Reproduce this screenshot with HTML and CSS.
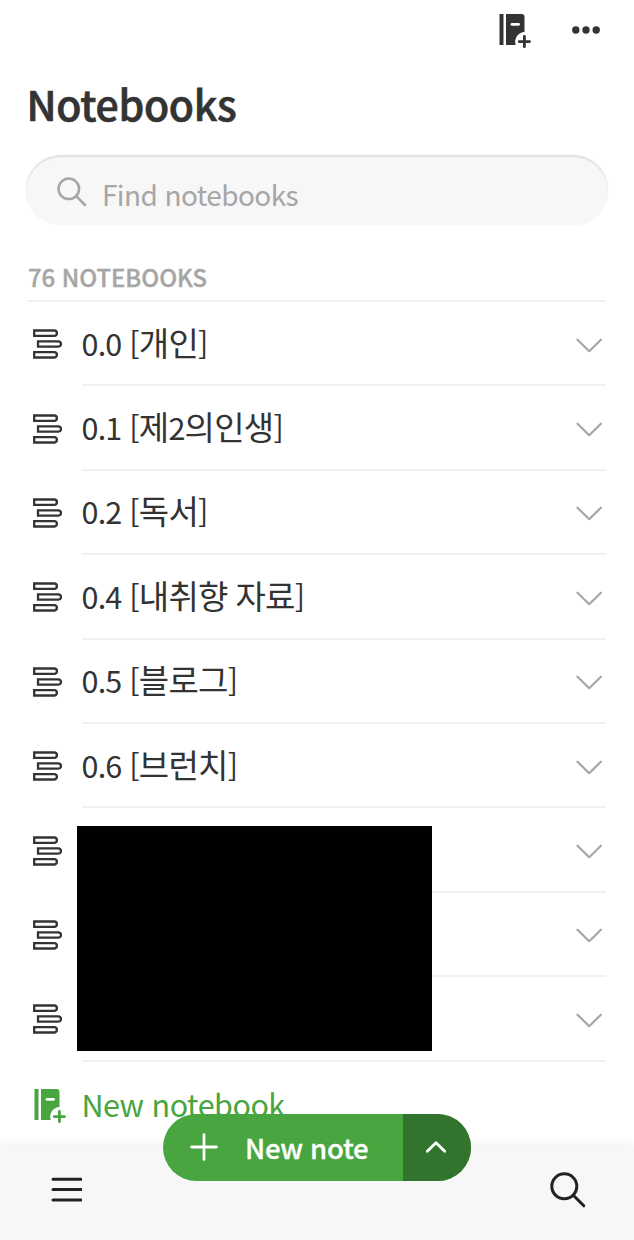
FILE: index.html
```
<!DOCTYPE html>
<html lang="ko">
<head>
    <meta charset="UTF-8">
    <meta name="viewport" content="width=device-width, initial-scale=1.0">
    <title>Notebooks</title>
    <link rel="stylesheet" href="styles.css">
</head>
<body>

    <!-- Shared icons -->
    <svg class="sprite">
        <symbol id="icon-notebook" viewBox="0 0 34 36">
            <path fill="currentColor" d="M.5 1h4v31h-4z"/>
            <path fill="currentColor" d="M7 1H22.500a3 3 0 0 1 3 3v15a9.800 9.800 0 0 0-8.800 13H7z"/>
            <path stroke="#fff" stroke-width="2.800" stroke-linecap="round" d="M13 11.300h6.600"/>
            <path stroke="currentColor" stroke-width="2.800" stroke-linecap="round" d="M20.200 28.600h10.300M25.400 23.500v10.200"/>
        </symbol>
        <symbol id="icon-stack" viewBox="0 0 30 30">
            <g fill="none" stroke="currentColor" stroke-width="2.300">
                <path d="M2.200 1.500H22.700a2.700 2.700 0 0 1 0 5.300H2.200z"/>
                <path d="M6 12.300H26.300a2.700 2.700 0 0 1 0 5.400H6z"/>
                <path d="M2.200 23.200H22.700a2.700 2.700 0 0 1 0 5.300H2.200z"/>
            </g>
        </symbol>
        <symbol id="icon-down" viewBox="0 0 26 15">
            <path fill="none" stroke="currentColor" stroke-width="2.200" stroke-linecap="round" stroke-linejoin="round" d="M1.500 1.700 13.200 13.200 24.900 1.700"/>
        </symbol>
    </svg>

    <header class="toolbar">
        <svg class="notebook-icon"><use href="#icon-notebook"/></svg>
        <svg class="more-icon" viewBox="0 0 28 8">
            <circle cx="3.800" cy="4" r="3.700"/>
            <circle cx="14" cy="4" r="3.700"/>
            <circle cx="24.200" cy="4" r="3.700"/>
        </svg>
    </header>

    <main>
        <h1>Notebooks</h1>

        <div class="search">
            <svg class="search-icon" viewBox="0 0 30 30">
                <circle cx="11.800" cy="11.800" r="10.300"/>
                <path d="M19.200 19.200 28 28"/>
            </svg>
            <span>Find notebooks</span>
        </div>

        <h2>76 NOTEBOOKS</h2>

        <ul class="notebooks">
            <li><svg class="stack"><use href="#icon-stack"/></svg><div class="row"><div class="name">0.0 [<span class="ko">개인</span>]</div><svg class="down"><use href="#icon-down"/></svg></div></li>
            <li><svg class="stack"><use href="#icon-stack"/></svg><div class="row"><div class="name">0.1 [<span class="ko">제</span>2<span class="ko">의인생</span>]</div><svg class="down"><use href="#icon-down"/></svg></div></li>
            <li><svg class="stack"><use href="#icon-stack"/></svg><div class="row"><div class="name">0.2 [<span class="ko">독서</span>]</div><svg class="down"><use href="#icon-down"/></svg></div></li>
            <li><svg class="stack"><use href="#icon-stack"/></svg><div class="row"><div class="name">0.4 [<span class="ko">내취향</span> <span class="ko">자료</span>]</div><svg class="down"><use href="#icon-down"/></svg></div></li>
            <li><svg class="stack"><use href="#icon-stack"/></svg><div class="row"><div class="name">0.5 [<span class="ko">블로그</span>]</div><svg class="down"><use href="#icon-down"/></svg></div></li>
            <li><svg class="stack"><use href="#icon-stack"/></svg><div class="row"><div class="name">0.6 [<span class="ko">브런치</span>]</div><svg class="down"><use href="#icon-down"/></svg></div></li>
            <li><svg class="stack"><use href="#icon-stack"/></svg><div class="row"><div class="hidden-names"></div><svg class="down"><use href="#icon-down"/></svg></div></li>
            <li><svg class="stack"><use href="#icon-stack"/></svg><div class="row"><svg class="down"><use href="#icon-down"/></svg></div></li>
            <li><svg class="stack"><use href="#icon-stack"/></svg><div class="row"><svg class="down"><use href="#icon-down"/></svg></div></li>
        </ul>

        <div class="new-notebook">
            <svg class="notebook-icon"><use href="#icon-notebook"/></svg>
            <span>New notebook</span>
        </div>
    </main>

    <footer class="bottom-bar">
        <svg class="menu-icon" viewBox="0 0 31 26">
            <path d="M2 2.300h28M2 12.600h28M2 22.900h28"/>
        </svg>
        <svg class="find-icon" viewBox="0 0 36 36">
            <circle cx="14.300" cy="14.300" r="12.500"/>
            <path d="M23.300 23.300 33.800 33.800"/>
        </svg>
        <div class="new-note">
            <div class="create">
                <svg class="plus-icon" viewBox="0 0 28 28"><path d="M14 1.600v24.800M1.600 14h24.800"/></svg>
                <span>New note</span>
            </div>
            <div class="expand">
                <svg class="up-icon" viewBox="0 0 20 12"><path d="M1.300 10.300 10 1.700l8.700 8.600"/></svg>
            </div>
        </div>
    </footer>

</body>
</html>
```
FILE: styles.css
```
* {
    box-sizing: border-box;
}
body {
    margin: 0;
    height: 1240px;
    overflow: hidden;
    display: flex;
    flex-direction: column;
    background: #fff;
    color: #333;
    font-family: "Noto Sans CJK KR", sans-serif;
}
svg {
    display: block;
    flex: none;
}
.sprite {
    position: absolute;
    width: 0;
    height: 0;
}
.toolbar {
    display: flex;
    justify-content: flex-end;
    align-items: flex-start;
    gap: 39px;
    height: 73px;
    padding: 13px 34px 0 0;
}
.notebook-icon {
    width: 34px;
    height: 36px;
}
.more-icon {
    width: 28px;
    height: 8px;
    margin-top: 13px;
    fill: #333;
}
main {
    flex: 1;
    min-height: 0;
    padding: 0 28px 0 27px;
}
h1 {
    margin: 0 0 0 -0.500px;
    height: 82px;
    font-size: 41px;
    line-height: 60px;
    font-weight: 500;
    letter-spacing: -0.300px;
    -webkit-text-stroke: 0.700px #333;
}
/* Search field */
.search {
    display: flex;
    align-items: center;
    gap: 15px;
    height: 70px;
    margin: 0 -2px 0 -1px;
    padding-left: 31px;
    border-radius: 35px;
    background: #f7f7f7;
    box-shadow: inset 0 2px 1px #e2e2e2, 0 0 2px #eee;
    color: #a6a6a6;
    font-size: 28px;
    line-height: 42px;
    letter-spacing: -0.600px;
}
.search span {
    padding-top: 7px;
}
.search-icon {
    width: 30px;
    height: 30px;
    margin-top: 4px;
    fill: none;
    stroke: #a6a6a6;
    stroke-width: 2.500;
    stroke-linecap: round;
}
h2 {
    margin: 0;
    height: 77px;
    padding: 35px 0 0 1px;
    border-bottom: 2px solid #f0f0f0;
    color: #a6a6a6;
    font-size: 23.800px;
    line-height: 34px;
    font-weight: 500;
    -webkit-text-stroke: 0.400px #a6a6a6;
}
/* Notebook list */
.notebooks {
    margin: 0;
    padding: 0;
    list-style: none;
}
.notebooks li {
    display: flex;
    align-items: center;
    height: 84.400px;
    padding-left: 5px;
}
.stack {
    width: 30px;
    height: 30px;
}
.row {
    position: relative;
    flex: 1;
    display: flex;
    align-items: center;
    height: 100%;
    margin-left: 20px;
    padding-right: 4px;
    border-bottom: 2px solid #f0f0f0;
}
.name {
    margin-left: -0.500px;
    padding-bottom: 1px;
    font-size: 30.500px;
    line-height: 46px;
    letter-spacing: -0.800px;
}
.ko {
    font-size: 33px;
    line-height: 1;
    letter-spacing: -0.700px;
}
.down {
    width: 26px;
    height: 15px;
    margin: 4px 0 0 auto;
    color: #a6a6a6;
}
/* Covers the last three names */
.hidden-names {
    position: absolute;
    z-index: 1;
    left: -5px;
    top: 18px;
    width: 355px;
    height: 225px;
    background: #000;
}
.new-notebook {
    display: flex;
    align-items: flex-start;
    gap: 13.500px;
    padding: 26px 0 0 7px;
    color: #48a540;
    font-size: 30.500px;
    line-height: 46px;
    letter-spacing: -0.500px;
}
.new-notebook span {
    margin-top: -7px;
}
/* Bottom bar */
.bottom-bar {
    position: relative;
    flex: none;
    display: flex;
    justify-content: space-between;
    align-items: flex-start;
    height: 92px;
    padding: 24px 48px 0 51px;
    background: #f7f7f7;
    box-shadow: 0 -2px 12px rgba(0, 0, 0, 0.08);
    fill: none;
    stroke: #222;
    stroke-width: 3;
    stroke-linecap: round;
    stroke-linejoin: round;
}
.menu-icon {
    width: 31px;
    height: 26px;
    margin-top: 5px;
}
.find-icon {
    width: 36px;
    height: 36px;
}
.new-note {
    position: absolute;
    left: 163px;
    top: -34.500px;
    display: flex;
    width: 307.500px;
    height: 67.500px;
    border-radius: 34px;
    overflow: hidden;
    background: #48a540;
    color: #fff;
    font-size: 27.500px;
    line-height: 42px;
    font-weight: 500;
    letter-spacing: -0.300px;
    stroke: #fff;
    stroke-width: 2.800;
}
.create {
    flex: 1;
    display: flex;
    align-items: center;
    padding-left: 26.500px;
    gap: 27.500px;
}
.create span {
    padding-bottom: 1px;
    -webkit-text-stroke: 0.300px #fff;
}
.plus-icon {
    width: 28px;
    height: 28px;
}
.expand {
    display: flex;
    justify-content: center;
    align-items: center;
    width: 68px;
    padding-right: 2px;
    background: #32742d;
}
.up-icon {
    width: 20px;
    height: 12px;
}
```
